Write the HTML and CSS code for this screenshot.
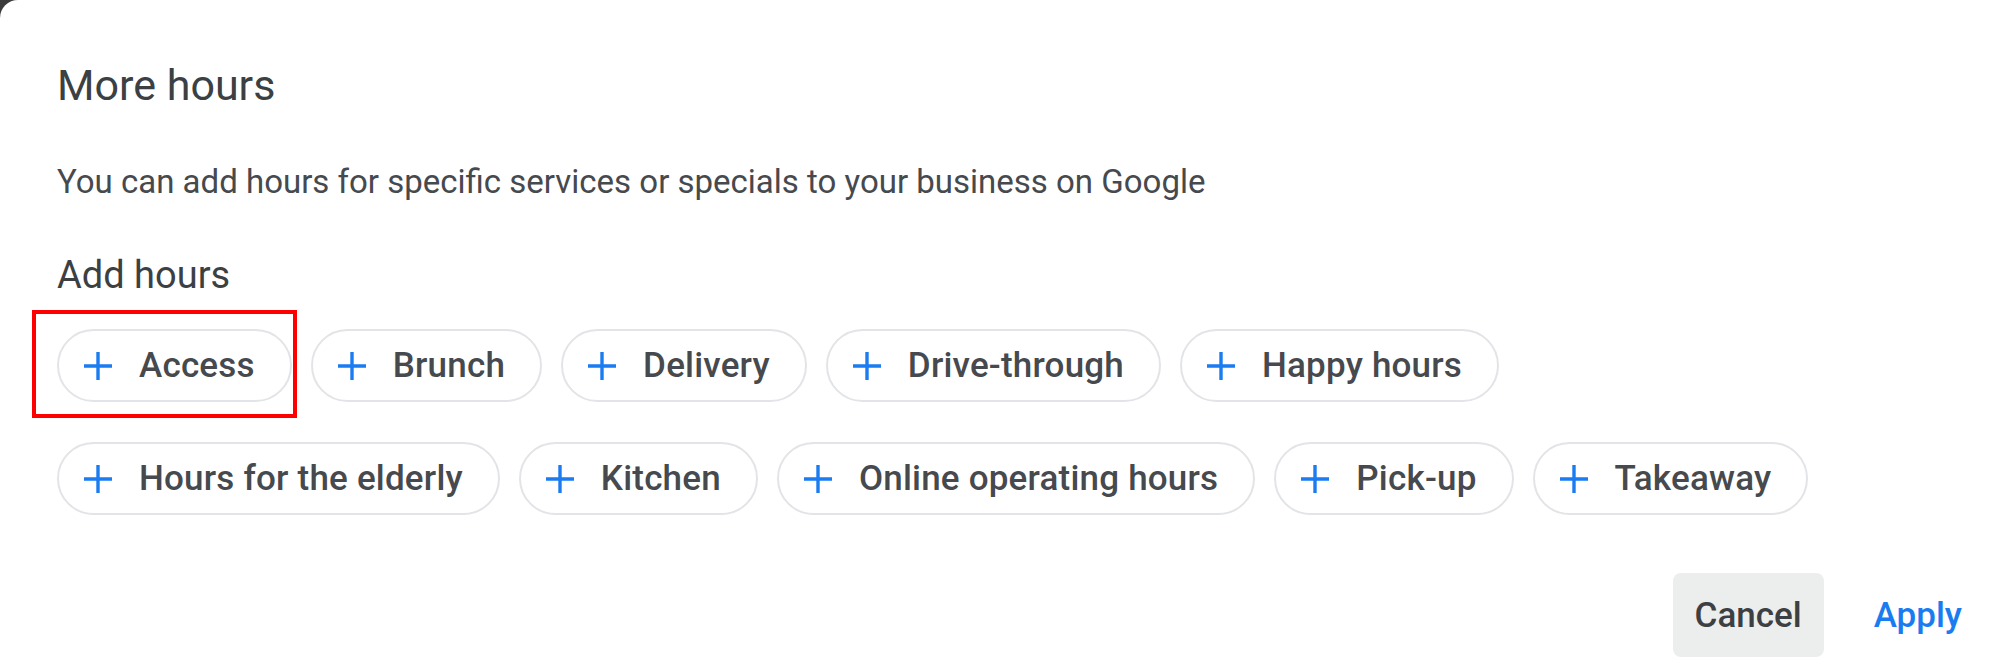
FILE: index.html
```html
<!DOCTYPE html>
<html lang="en">
<head>
<meta charset="utf-8">
<title>More hours</title>
<link rel="stylesheet" href="styles.css">
</head>
<body>
<div class="dialog">
  <h1 class="title">More hours</h1>
  <p class="desc">You can add hours for specific services or specials to your business on Google</p>
  <h2 class="subtitle">Add hours</h2>
  <div class="chips">
    <div class="chip-row">
      <button class="chip chip-marked"><svg class="plus" viewBox="0 0 30 30"><path d="M15 1v28M1 15h28"/></svg><span>Access</span><span class="highlight"></span></button>
      <button class="chip"><svg class="plus" viewBox="0 0 30 30"><path d="M15 1v28M1 15h28"/></svg><span>Brunch</span></button>
      <button class="chip"><svg class="plus" viewBox="0 0 30 30"><path d="M15 1v28M1 15h28"/></svg><span>Delivery</span></button>
      <button class="chip"><svg class="plus" viewBox="0 0 30 30"><path d="M15 1v28M1 15h28"/></svg><span>Drive-through</span></button>
      <button class="chip"><svg class="plus" viewBox="0 0 30 30"><path d="M15 1v28M1 15h28"/></svg><span>Happy hours</span></button>
    </div>
    <div class="chip-row">
      <button class="chip"><svg class="plus" viewBox="0 0 30 30"><path d="M15 1v28M1 15h28"/></svg><span>Hours for the elderly</span></button>
      <button class="chip"><svg class="plus" viewBox="0 0 30 30"><path d="M15 1v28M1 15h28"/></svg><span>Kitchen</span></button>
      <button class="chip"><svg class="plus" viewBox="0 0 30 30"><path d="M15 1v28M1 15h28"/></svg><span>Online operating hours</span></button>
      <button class="chip"><svg class="plus" viewBox="0 0 30 30"><path d="M15 1v28M1 15h28"/></svg><span>Pick-up</span></button>
      <button class="chip"><svg class="plus" viewBox="0 0 30 30"><path d="M15 1v28M1 15h28"/></svg><span>Takeaway</span></button>
    </div>
  </div>
  <div class="actions">
    <button class="btn btn-cancel">Cancel</button>
    <button class="btn btn-apply">Apply</button>
  </div>
</div>
</body>
</html>
```

FILE: styles.css
```css
html, body {
  margin: 0;
  padding: 0;
  height: 100%;
}
body {
  background: #3b3b3b;
  font-family: Roboto, "Noto Sans", "Liberation Sans", sans-serif;
  overflow: hidden;
}
.dialog {
  box-sizing: border-box;
  width: 2000px;
  height: 669px;
  background: #ffffff;
  border-top-left-radius: 18px;
  padding: 60px 0 0 57px;
}
.title {
  margin: 0;
  font-size: 43px;
  line-height: 50px;
  font-weight: 400;
  color: #3c4043;
}
.desc {
  margin: 52px 0 0;
  font-size: 33px;
  line-height: 40px;
  font-weight: 400;
  color: #46494d;
}
.subtitle {
  margin: 50px 0 0;
  font-size: 38px;
  line-height: 46px;
  font-weight: 400;
  color: #3c4043;
}
.chips {
  margin-top: 31px;
  display: flex;
  flex-direction: column;
  gap: 40px;
}
.chip-row {
  display: flex;
  gap: 19px;
}
.chip {
  position: relative;
  box-sizing: border-box;
  height: 73px;
  display: inline-flex;
  align-items: center;
  gap: 26px;
  padding: 0 35px 0 24px;
  border: 2px solid #e3e4e7;
  border-radius: 37px;
  background: #ffffff;
  font-family: Roboto, "Noto Sans", "Liberation Sans", sans-serif;
  font-size: 35px;
  letter-spacing: 0.2px;
  font-weight: 500;
  color: #46494d;
  white-space: nowrap;
}
.plus {
  width: 30px;
  height: 30px;
  flex: none;
}
.plus path {
  stroke: #1a7cf0;
  stroke-width: 3.4;
  fill: none;
}
.highlight {
  position: absolute;
  left: -27px;
  top: -21px;
  width: 265px;
  height: 108px;
  box-sizing: border-box;
  border: 4px solid #ff0000;
  pointer-events: none;
}
.actions {
  margin-top: 58px;
  display: flex;
  justify-content: flex-end;
  gap: 26px;
  padding-right: 14px;
}
.btn {
  box-sizing: border-box;
  height: 84px;
  border: none;
  border-radius: 8px;
  font-family: Roboto, "Noto Sans", "Liberation Sans", sans-serif;
  font-size: 35px;
  font-weight: 500;
  background: transparent;
}
.btn-cancel {
  width: 151px;
  padding: 0;
  background: #eceded;
  color: #3c4043;
}
.btn-apply {
  padding: 0 24px;
  color: #1a7cf0;
}
```
